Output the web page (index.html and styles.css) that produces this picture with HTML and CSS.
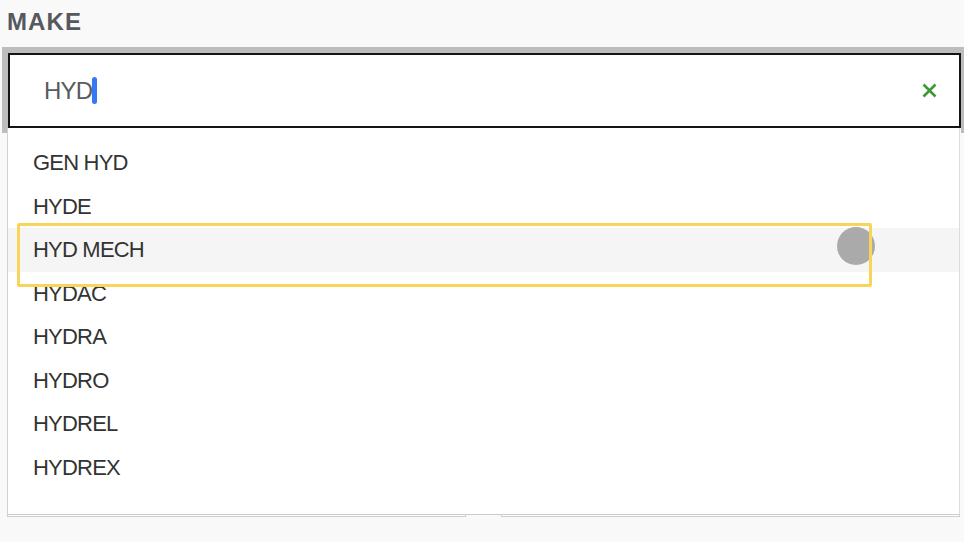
FILE: index.html
```html
<!DOCTYPE html>
<html>
<head>
<meta charset="utf-8">
<link rel="stylesheet" href="styles.css">
</head>
<body>
  <div class="field">
    <div class="label">MAKE</div>
    <div class="focus-ring">
      <div class="input">
        <span class="value">HYD</span><span class="caret"></span>
        <span class="spacer"></span>
        <svg class="clear" width="15" height="15" viewBox="0 0 15 15">
          <path d="M1.5 1.5 L13.5 13.5 M13.5 1.5 L1.5 13.5" stroke="#3d9a33" stroke-width="2.6" stroke-linecap="butt" fill="none"/>
        </svg>
      </div>
    </div>
    <div class="under-row">
      <div class="under-box"></div>
      <div class="under-box"></div>
    </div>
  </div>

  <ul class="dropdown">
    <li class="option">GEN HYD</li>
    <li class="option">HYDE</li>
    <li class="option option-active">HYD MECH</li>
    <li class="option">HYDAC</li>
    <li class="option">HYDRA</li>
    <li class="option">HYDRO</li>
    <li class="option">HYDREL</li>
    <li class="option">HYDREX</li>
  </ul>

  <div class="tap-dot"></div>
  <div class="focus-box"></div>
</body>
</html>
```

FILE: styles.css
```css
html, body {
  margin: 0;
  padding: 0;
}
body {
  background: #f9f9f9;
  font-family: "Liberation Sans", Arial, sans-serif;
  width: 964px;
  height: 542px;
  overflow: hidden;
  position: relative;
}
.field {
  display: flex;
  flex-direction: column;
}
.label {
  padding: 10px 0 0 7px;
  font-size: 24px;
  line-height: 24px;
  font-weight: bold;
  letter-spacing: 1.1px;
  color: #55585c;
}
.focus-ring {
  margin: 13px 0 0 2px;
  border-top: 6px solid #bdbdbd;
  border-left: 6px solid #bdbdbd;
  border-right: 3px solid #bdbdbd;
  padding-bottom: 5px;
}
.input {
  height: 71px;
  border: 2px solid #141414;
  background: #fff;
  display: flex;
  align-items: center;
  padding-left: 34px;
}
.value {
  font-size: 24px;
  letter-spacing: -0.8px;
  color: #5a5b5d;
}
.caret {
  width: 5px;
  height: 27px;
  border-radius: 3px;
  background: #3479f3;
}
.spacer {
  flex: 1;
}
.clear {
  margin-right: 22px;
}
.under-row {
  display: flex;
  gap: 35px;
  padding-left: 7px;
}
.under-box {
  width: 457px;
  height: 382px;
  border: 1px solid #cfcfcf;
  background: #fff;
}
.dropdown {
  position: absolute;
  left: 7px;
  top: 128px;
  width: 951px;
  height: 372.5px;
  margin: 0;
  padding: 13.3px 0 0 0;
  list-style: none;
  background: #fff;
  border-left: 1px solid #d2d2d2;
  border-right: 1px solid #dcdcdc;
  border-bottom: 1px solid #cccccc;
}
.option {
  height: 43.5px;
  line-height: 43.5px;
  padding-left: 25px;
  font-size: 22px;
  letter-spacing: -0.8px;
  color: #333333;
}
.option-active {
  background: #f5f5f5;
}
.tap-dot {
  position: absolute;
  left: 837px;
  top: 227px;
  width: 38px;
  height: 38px;
  border-radius: 50%;
  background: #aaaaab;
}
.focus-box {
  position: absolute;
  left: 17px;
  top: 223px;
  width: 849px;
  height: 58px;
  border: 3px solid #f8d45a;
  border-radius: 2px;
}
```
